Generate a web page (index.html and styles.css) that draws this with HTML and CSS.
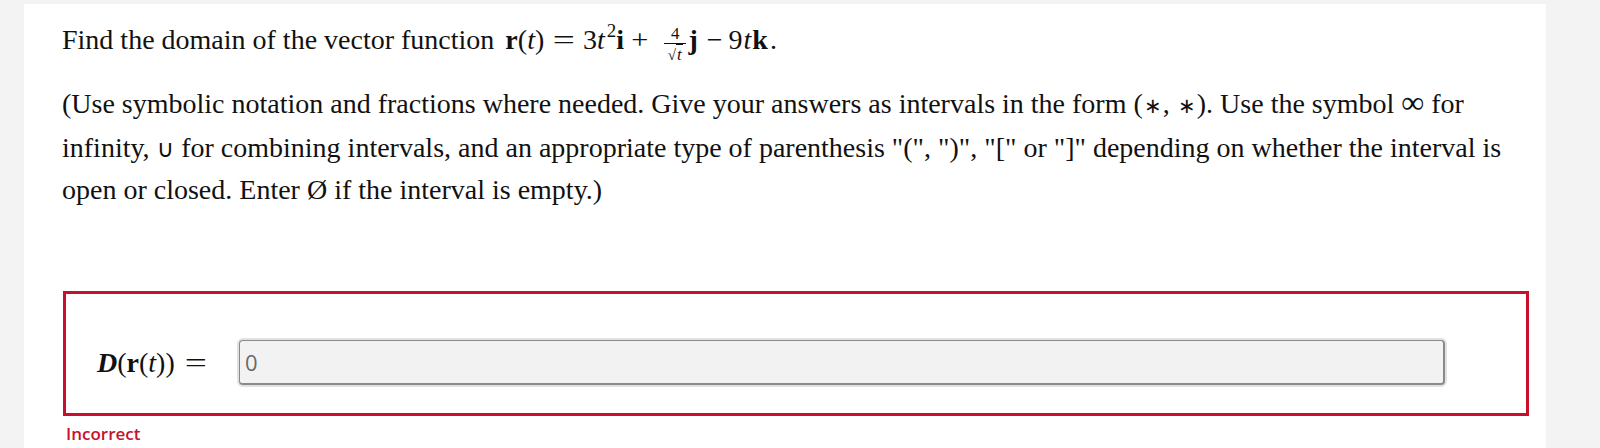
FILE: index.html
```html
<!DOCTYPE html>
<html lang="en">
<head>
<meta charset="utf-8">
<title>Domain of vector function</title>
<link rel="stylesheet" href="styles.css">
</head>
<body>
<main class="card">
  <p class="title">Find the domain of the vector function <span class="math"><b class="bf">r</b>(<i>t</i>)<span class="rel">=</span>3<i>t</i><sup class="sup">2</sup><b class="bf">i</b><span class="bin">+</span><span class="frac"><span class="num">4</span><span class="den"><span class="rad">√</span><i class="radt">t</i></span></span><b class="bf">j</b><span class="minus">−</span><span class="tail">9<i class="it">t</i><b class="bf">k</b>.</span></span></p>
  <p class="instructions">(Use symbolic notation and fractions where needed. Give your answers as intervals in the form (<span class="ast">∗</span>, <span class="ast">∗</span>). Use the symbol <span class="inf">∞</span> for infinity, <span class="cup">∪</span> for combining intervals, and an appropriate type of parenthesis "(", ")", "[" or "]" depending on whether the interval is open or closed. Enter <span class="empty">Ø</span> if the interval is empty.)</p>
  <section class="answer">
    <span class="label"><i class="bi">D</i>(<b class="bf">r</b>(<i>t</i>))<span class="rel">=</span></span>
    <input class="field" type="text" value="0" readonly>
  </section>
  <p class="status">Incorrect</p>
</main>
</body>
</html>
```

FILE: styles.css
```css
html, body {
  margin: 0;
  padding: 0;
}
body {
  background: #f3f3f3;
  padding: 4px 54px 0 24px;
  height: 448px;
  box-sizing: border-box;
  overflow: hidden;
}
.card {
  background: #ffffff;
  height: 100%;
  box-sizing: border-box;
  padding: 15px 17px 0 38px;
  font-family: "Liberation Serif", "Times New Roman", serif;
  font-size: 28px;
  color: #111;
}
.title {
  margin: 0;
  height: 42px;
  line-height: 42px;
  white-space: nowrap;
}
.math {
  margin-left: 4px;
}
.bf {
  font-weight: bold;
}
.bi {
  font-style: italic;
  font-weight: bold;
}
.rel {
  display: inline-block;
  margin: 0 11px 0 12px;
  transform: scaleX(1.4);
}
.bin {
  display: inline-block;
  margin: 0 15px 0 8px;
  transform: scaleX(1.08);
}
.minus {
  display: inline-block;
  margin: 0 6px 0 9px;
}
.it {
  margin: 0 1px 0 1px;
}
.tail .bf {
  margin-right: 2px;
}
.sup {
  font-size: 19px;
  line-height: 0;
  vertical-align: 12px;
  margin-left: 2px;
}
.frac {
  display: inline-flex;
  flex-direction: column;
  align-items: center;
  vertical-align: 10px;
  line-height: 13px;
  margin: 0 2px 0 1px;
}
.num {
  font-size: 17px;
  padding: 0 7px 3px;
  border-bottom: 1px solid #111;
  text-align: center;
}
.den {
  font-size: 17px;
  padding-top: 3px;
  line-height: 15px;
}
.rad {
  font-size: 15px;
}
.radt {
  border-top: 1px solid #111;
  padding: 0 1px;
}
.instructions {
  margin: 22px 0 0;
  line-height: 42px;
}
.ast {
  font-size: 21px;
  margin: 0 1px;
}
.inf {
  font-size: 32px;
  line-height: 0;
}
.cup {
  font-family: "DejaVu Sans", sans-serif;
  font-size: 24px;
  line-height: 0;
}
.empty {
  font-size: 28px;
}
.answer {
  margin: 80px 0 0 1px;
  border: 3px solid #c8102e;
  padding: 46px 79px 28px 31px;
  display: flex;
  align-items: center;
}
.label {
  line-height: 42px;
  width: 140px;
  white-space: nowrap;
  flex: none;
}
.label .rel {
  margin: 0 0 0 13px;
}
.field {
  flex: 1;
  height: 45px;
  box-sizing: border-box;
  margin: 0 2px;
  border: 1px solid #8a8a8a;
  border-right-width: 2px;
  border-bottom-width: 2px;
  border-radius: 4px;
  box-shadow: 0 0 0 2px #e2e2e2;
  background: #f2f2f2;
  font-family: "Open Sans", "Liberation Sans", sans-serif;
  font-size: 22px;
  color: #6a6a6a;
  padding: 0 5px;
  outline: none;
}
.status {
  margin: 8px 0 0 4px;
  font-family: "Open Sans", "Liberation Sans", sans-serif;
  font-weight: 600;
  font-size: 17px;
  line-height: 20px;
  color: #c8102e;
}
```
